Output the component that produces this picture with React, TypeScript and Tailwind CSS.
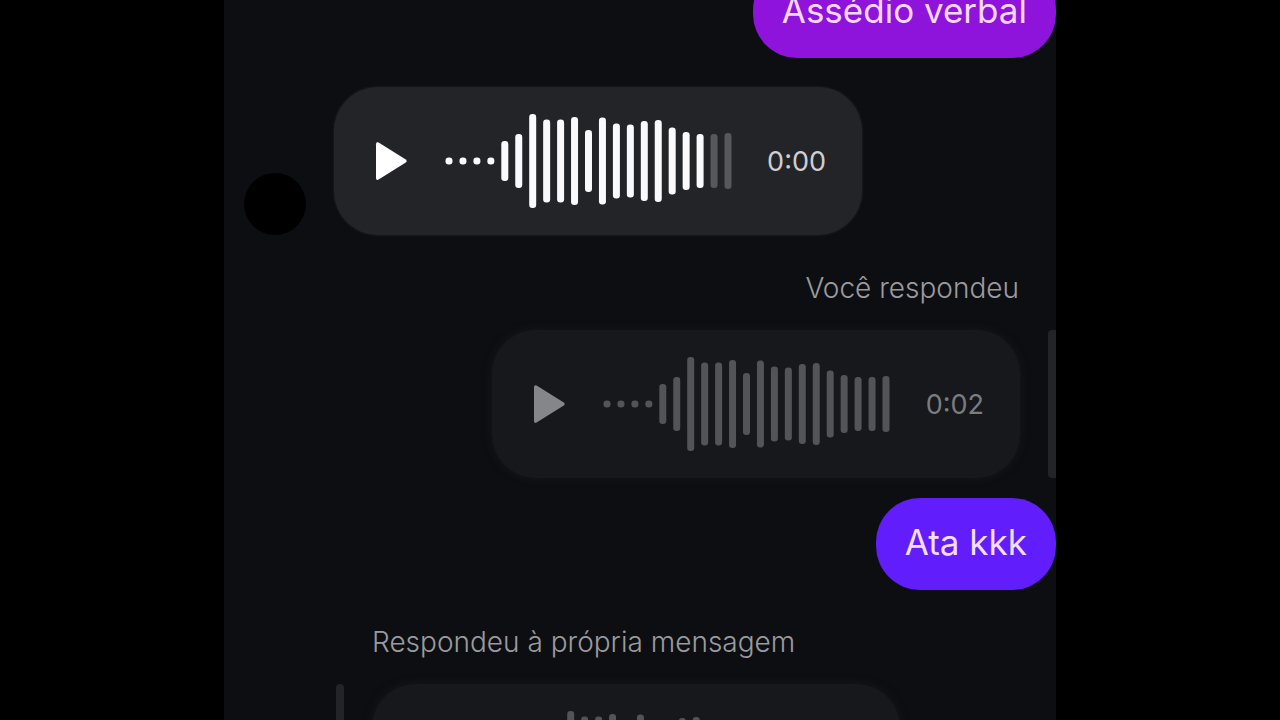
const LEVELS = [7, 7, 7, 7, 40, 54, 94, 83, 83, 88, 62, 87, 75, 73, 80, 82, 67, 58, 54, 54, 56];

type VoiceProps = { time?: string; played?: number; quoted?: boolean };

function Waveform({ played, quoted }: { played: number; quoted: boolean }) {
  return (
    <svg viewBox="0 0 288 96" className="h-24 w-72 shrink-0" aria-hidden="true">
      {LEVELS.map((level, i) => (
        <rect
          key={i}
          x={i * 13.95 + 1.5}
          y={48 - level / 2}
          width="7"
          height={level}
          rx="3.2"
          fill={quoted ? '#535458' : i < played ? '#fafafc' : '#57585c'}
        />
      ))}
    </svg>
  );
}

function VoiceMessage({ time, played = 0, quoted = false }: VoiceProps) {
  return (
    <article
      className={
        quoted
          ? 'flex h-37 w-[528px] shrink-0 items-center rounded-[44px] bg-[#17181c] pr-9 pl-10 text-[#7b7c80] shadow-[0_0_8px_#17181c]'
          : 'flex h-37 w-[528px] shrink-0 items-center rounded-[44px] bg-[#232428] pr-9 pl-10 text-[#cfcfd2] shadow-[0_0_3px_#232428]'
      }
    >
      <button type="button" aria-label="Reproduzir" className="mr-9 shrink-0">
        <svg viewBox="0 0 34 40" className="h-10 w-[34px]" aria-hidden="true">
          <path
            d="M4.6 1.6 L31.4 18.2 Q34 20 31.4 21.8 L4.6 38.6 Q2 39.8 2 37 V3.2 Q2 0.6 4.6 1.6Z"
            fill={quoted ? '#85868a' : '#ffffff'}
          />
        </svg>
      </button>
      <Waveform played={played} quoted={quoted} />
      {time && <time className="ml-auto pt-0.5 text-[27px] leading-8">{time}</time>}
    </article>
  );
}

export default function App() {
  return (
    <div className="h-screen overflow-hidden bg-black font-['Inter',sans-serif]">
      <main className="mx-auto h-full w-[65%] overflow-hidden bg-[#0d0e12]">
        <div className="-mt-[34px] flex flex-col">
          <p className="self-end rounded-[44px] bg-[#8e14dc] px-[29px] pt-[22px] pb-[26px] text-[35px] leading-[44px] text-[#f6d8ff]">
            Assédio verbal
          </p>

          <div className="mt-[29px] flex items-end gap-7 pl-5">
            <span className="size-[62px] shrink-0 rounded-full bg-black" />
            <VoiceMessage time="0:00" played={19} />
          </div>

          <p className="mt-[37px] self-end pr-[37px] text-[28px] leading-8 font-light text-[#9a9b9f]">Você respondeu</p>
          <div className="mt-[26px] flex justify-end gap-7">
            <VoiceMessage time="0:02" quoted />
            <span className="w-2 shrink-0 rounded-l bg-[#232428]" />
          </div>
          <p className="mt-5 self-end rounded-[44px] bg-[#611dfb] px-[29px] pt-[22px] pb-[26px] text-[35px] leading-[44px] text-[#f4deff]">
            Ata kkk
          </p>

          <p className="mt-9 pl-37 text-[28px] leading-8 font-light text-[#9a9b9f]">Respondeu à própria mensagem</p>
          <div className="mt-[26px] flex gap-7 pl-28">
            <span className="w-2 shrink-0 rounded bg-[#232428]" />
            <VoiceMessage quoted />
          </div>
        </div>
      </main>
    </div>
  );
}
